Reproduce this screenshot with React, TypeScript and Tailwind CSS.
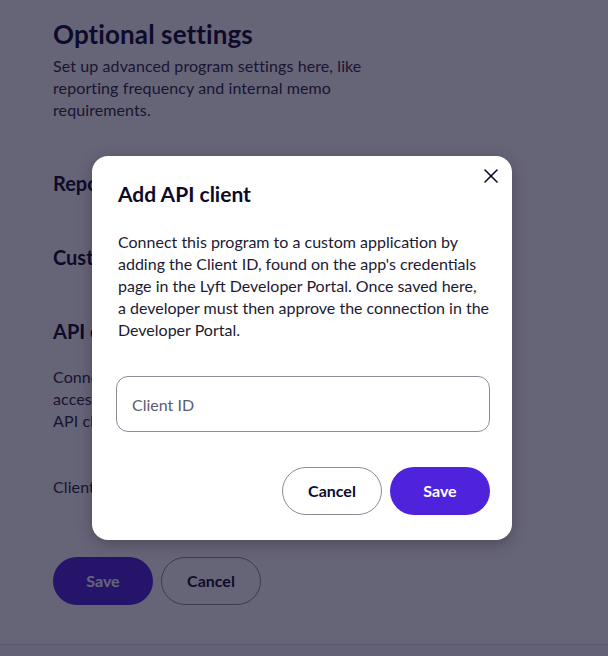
import { X } from 'lucide-react';

const font = { fontFamily: 'Lato, "Noto Sans", sans-serif' };

function Section({ title }: { title: string }) {
  return (
    <div className="mb-[44px]">
      <h2 className="text-[20px] leading-[30px] font-bold text-[#0c0a2a]">{title}</h2>
    </div>
  );
}

export default function App() {
  return (
    <div className="relative min-h-[656px] bg-white overflow-hidden" style={font}>
      {/* page under the dialog */}
      <main className="px-[53px] pt-[18px] h-[644px]">
        <h1 className="text-[26px] leading-[32px] font-bold tracking-[0.1px] text-[#0c0a2a]">Optional settings</h1>
        <p className="mt-[5px] text-[16px] leading-[22px] tracking-[0.1px] text-[#2a2740]">
          Set up advanced program settings here, like
          <br />
          reporting frequency and internal memo
          <br />
          requirements.
        </p>

        <div className="mt-[47px]">
          <Section title="Reporting frequency" />
          <Section title="Custom fields" />
          <div>
            <h2 className="text-[20px] leading-[30px] font-bold text-[#0c0a2a]">API clients</h2>
            <p className="mt-[20px] text-[16px] leading-[22px] tracking-[0.1px] text-[#2a2740]">
              Connect this program to a custom application to
              <br />
              access ride data through the Lyft API. Add an
              <br />
              API client below.
            </p>
            <div className="mt-[44px] text-[16px] leading-[22px] tracking-[0.1px] text-[#2a2740]">Client ID</div>
          </div>
        </div>

        <div className="mt-[59px] flex gap-2">
          <button className="h-12 w-[100px] rounded-full bg-[#4f23dc] text-[16px] font-bold text-white">Save</button>
          <button className="h-12 w-[100px] rounded-full border border-[#8e8a9c] bg-white text-[16px] font-bold text-[#0c0a2a]">
            Cancel
          </button>
        </div>
      </main>
      <footer className="h-[12px] border-t border-[#d9d7e1] bg-[#f6f5f9]" />

      {/* overlay */}
      <div className="absolute inset-0 bg-[rgba(15,12,42,0.64)]" />

      {/* dialog */}
      <div className="absolute left-[92px] top-[156px] w-[420px] rounded-2xl bg-white pl-6 pr-[22px] pt-6 pb-[25px] shadow-[0_4px_16px_rgba(0,0,0,0.25)]">
        <button className="absolute right-[5px] top-[4px] p-1 text-[#0c0a2a]">
          <X size={24} strokeWidth={1.6} />
        </button>
        <h2 className="pl-[2px] text-[21px] leading-[28px] font-bold text-[#0c0a2a]">Add API client</h2>
        <p className="mt-[23px] pl-[2px] whitespace-nowrap text-[16px] leading-[22px] text-[#1c1a33]">
          Connect this program to a custom application by
          <br />
          adding the Client ID, found on the app's credentials
          <br />
          page in the Lyft Developer Portal. Once saved here,
          <br />
          a developer must then approve the connection in the
          <br />
          Developer Portal.
        </p>
        <input
          placeholder="Client ID"
          className="mt-[35px] block h-[56px] w-full rounded-xl border border-[#8e8a9c] px-[15px] text-[16px] text-[#0c0a2a] placeholder:text-[#5e5b6e] outline-none"
        />
        <div className="mt-[35px] flex justify-end gap-2">
          <button className="h-12 w-[100px] rounded-full border border-[#8e8a9c] bg-white text-[16px] font-bold text-[#0c0a2a]">
            Cancel
          </button>
          <button className="h-12 w-[100px] rounded-full bg-[#4f23dc] text-[16px] font-bold text-white">Save</button>
        </div>
      </div>
    </div>
  );
}
